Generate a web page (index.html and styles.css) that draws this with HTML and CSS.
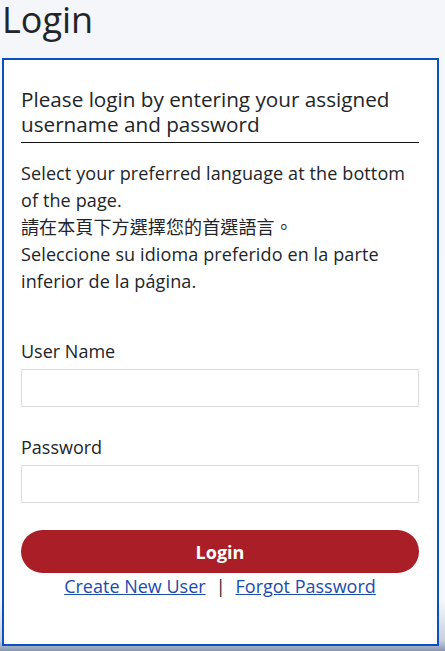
FILE: index.html
```html
<!DOCTYPE html>
<html lang="en">
<head>
<meta charset="utf-8">
<title>Login</title>
<link rel="stylesheet" href="styles.css">
</head>
<body>
<h1 class="page-title">Login</h1>
<div class="card">
  <h2 class="card-heading">Please login by entering your assigned username and password</h2>
  <p class="lang-note">Select your preferred language at the bottom of the page.<br>請在本頁下方選擇您的首選語言。<br>Seleccione su idioma preferido en la parte inferior de la página.</p>
  <form class="login-form">
    <label class="field-label" for="user">User Name</label>
    <input class="field-input" id="user" type="text">
    <label class="field-label" for="pass">Password</label>
    <input class="field-input" id="pass" type="password">
    <button class="login-btn" type="button">Login</button>
    <div class="links">
      <a href="#" class="link">Create New User</a>
      <span class="sep">|</span>
      <a href="#" class="link">Forgot Password</a>
    </div>
  </form>
</div>
</body>
</html>
```

FILE: styles.css
```css
* { box-sizing: border-box; }
html, body { height: 100%; }
body {
  margin: 0;
  font-family: "Open Sans", "Noto Sans CJK TC", sans-serif;
  color: #212529;
  background: linear-gradient(to bottom, #f4f6fa 0, #f5f7fb 600px, #c9d1de 640px, #8796b0 651px);
  overflow: hidden;
}
.page-title {
  margin: 0 0 20px 2px;
  padding-top: 1px;
  font-size: 36px;
  line-height: 37px;
  font-weight: 400;
  color: #212529;
}
.card {
  margin-left: 2px;
  width: 437px;
  background: #fff;
  border: 2px solid #0b4fc4;
  padding: 27px 18px 45px 17px;
}
.card-heading {
  margin: 0;
  font-size: 20.7px;
  line-height: 25px;
  font-weight: 400;
  padding-bottom: 5px;
  border-bottom: 1px solid #111;
}
.lang-note {
  margin: 17px 0 0;
  font-size: 18px;
  letter-spacing: 0.12px;
  line-height: 27px;
}
.login-form {
  display: flex;
  flex-direction: column;
  margin-top: 44px;
}
.field-label {
  font-size: 18px;
  line-height: 24px;
  margin-bottom: 6px;
}
.field-input {
  height: 38px;
  border: 1px solid #dcdde1;
  border-radius: 0;
  margin: 0 0 28px;
  font: inherit;
  padding: 0 8px;
}
.login-btn {
  margin-top: -1px;
  height: 43px;
  border: 0;
  border-radius: 22px;
  background: #a91e27;
  color: #fff;
  font-family: "Open Sans", sans-serif;
  font-size: 18px;
  font-weight: 700;
}
.links {
  display: flex;
  justify-content: center;
  gap: 10px;
  font-size: 18px;
  line-height: 26px;
}
.link { color: #1a4bb0; text-decoration: underline; }
.sep { color: #212529; }
```
